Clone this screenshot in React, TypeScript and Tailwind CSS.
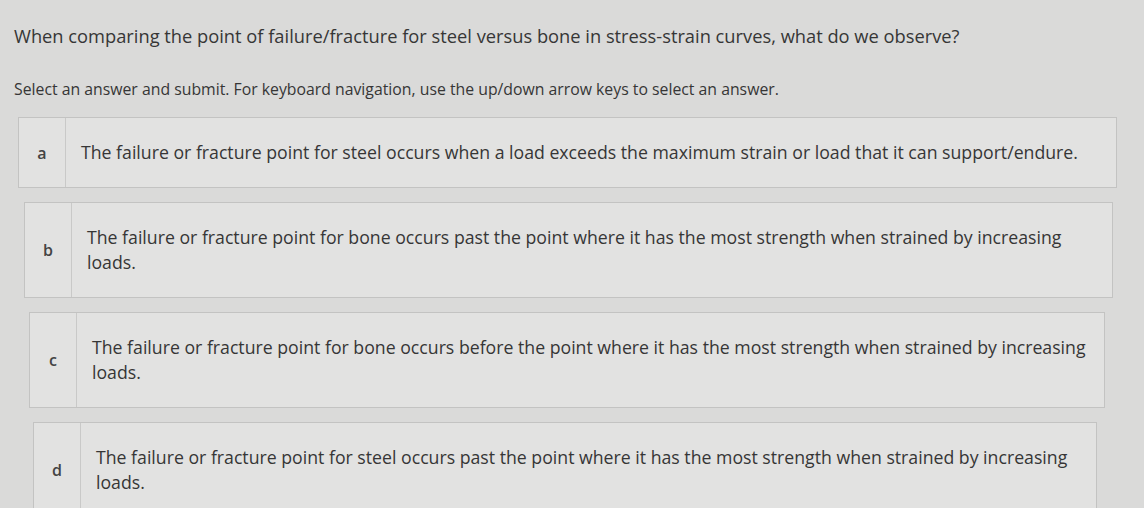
import React, { useState } from 'react';

type Choice = {
  key: string;
  text: string;
  shift: string;
};

const CHOICES: Choice[] = [
  {
    key: 'a',
    text: 'The failure or fracture point for steel occurs when a load exceeds the maximum strain or load that it can support/endure.',
    shift: 'ml-[18px] mr-[27px]',
  },
  {
    key: 'b',
    text: 'The failure or fracture point for bone occurs past the point where it has the most strength when strained by increasing loads.',
    shift: 'ml-[24px] mr-[31px]',
  },
  {
    key: 'c',
    text: 'The failure or fracture point for bone occurs before the point where it has the most strength when strained by increasing loads.',
    shift: 'ml-[29px] mr-[39px]',
  },
  {
    key: 'd',
    text: 'The failure or fracture point for steel occurs past the point where it has the most strength when strained by increasing loads.',
    shift: 'ml-[33px] mr-[47px]',
  },
];

export default function App() {
  const [selected, setSelected] = useState<string | null>(null);

  return (
    <div
      className="w-[1144px] h-[508px] overflow-hidden bg-[#dadad9] text-[#363636]"
      style={{ fontFamily: '"Open Sans", "Noto Sans", sans-serif' }}
    >
      <h1 className="pl-[14px] pt-[22px] text-[18.3px] leading-[28px]">
        When comparing the point of failure/fracture for steel versus bone in stress-strain curves, what do we observe?
      </h1>
      <p className="pl-[14px] pt-[28px] text-[15.8px] leading-[22px]">
        Select an answer and submit. For keyboard navigation, use the up/down arrow keys to select an answer.
      </p>

      <div role="radiogroup" className="mt-[17px] flex flex-col gap-[14px]">
        {CHOICES.map(choice => (
          <button
            key={choice.key}
            role="radio"
            aria-checked={selected === choice.key}
            onClick={() => setSelected(choice.key)}
            className={`${choice.shift} flex items-stretch text-left border border-[#c3c3c2] bg-[#e2e2e1]`}
          >
            <span className="w-[47px] shrink-0 flex items-center justify-center border-r border-[#c9c9c8] text-[16px] font-semibold text-[#444]">
              {choice.key}
            </span>
            <span className="flex-1 pl-[15px] pr-[8px] py-[22px] text-[17.7px] leading-[25px]">
              {choice.text}
            </span>
          </button>
        ))}
      </div>
    </div>
  );
}
